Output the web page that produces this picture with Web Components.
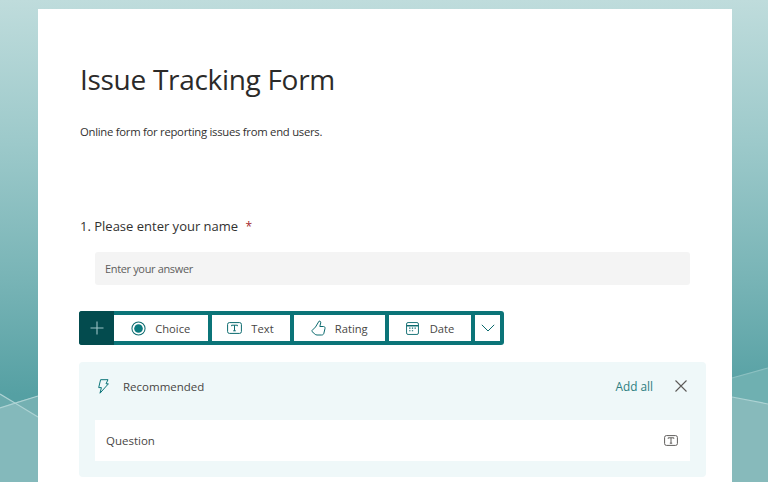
<!DOCTYPE html>
<html>
<head>
<meta charset="utf-8">
<title>Issue Tracking Form</title>
<style>
  html, body { margin: 0; height: 482px; overflow: hidden; }
  body { font-family: "Open Sans", "Noto Sans", "Liberation Sans", sans-serif; color: #323130; }
</style>
</head>
<body>
<form-page>
  <form-card>
    <form-header title-text="Issue Tracking Form" subtitle="Online form for reporting issues from end users."></form-header>
    <form-question label="1. Please enter your name" placeholder="Enter your answer"></form-question>
    <insert-toolbar>
      <tool-button icon="choice" width="93.5">Choice</tool-button>
      <tool-button icon="text" width="78">Text</tool-button>
      <tool-button icon="rating" width="91.5">Rating</tool-button>
      <tool-button icon="date" width="82" style="--gap: 11px">Date</tool-button>
    </insert-toolbar>
    <recommended-panel>
      <recommended-row>Question</recommended-row>
    </recommended-panel>
  </form-card>
</form-page>

<script>
const ICONS = {
  choice: `<svg width="15" height="15" viewBox="0 0 16 16"><circle cx="8" cy="8" r="7" fill="none" stroke="#0b6a6e" stroke-width="1.1"/><circle cx="8" cy="8" r="4.6" fill="#0b7a7e"/></svg>`,
  text: `<svg width="15" height="12" viewBox="0 0 15 12" fill="none" stroke="#0b6a6e" stroke-width="1"><rect x=".6" y=".6" width="13.8" height="10.8" rx="1.8"/><path d="M4.6 4.2V3.2h5.8v1M7.5 3.2v5.6M6.2 8.8h2.6"/></svg>`,
  rating: `<svg width="15" height="16" viewBox="0 0 15 16" fill="none" stroke="#0b6a6e" stroke-width="1" stroke-linejoin="round"><path d="M1 10.5 4.5 7 8 1.2C9.3.8 10 1.8 9.7 3L8.8 6.5h3.7c1.1 0 1.8.9 1.5 2l-1.2 5c-.3 1.1-1.2 1.5-2.2 1.5H6c-1 0-1.6-.4-2.2-1L1 11.5c-.4-.3-.3-.7 0-1Z"/></svg>`,
  date: `<svg width="13" height="13" viewBox="0 0 14 14" fill="none" stroke="#0b6a6e" stroke-width="1"><rect x=".6" y=".6" width="12.8" height="12.8" rx="1.6"/><path d="M.6 4h12.8" stroke-width="1.6"/><path d="M3.4 6.6h1.4M6.3 6.6h1.4M9.2 6.6h1.4M3.4 9.4h1.4M6.3 9.4h1.4" stroke-width="1.2"/></svg>`
};

class FormPage extends HTMLElement {
  constructor() {
    super();
    this.attachShadow({ mode: 'open' }).innerHTML = `
      <style>
        :host {
          display: block;
          position: relative;
          width: 768px;
          height: 482px;
          overflow: hidden;
          box-sizing: border-box;
          padding: 9px 36px 0 38px;
          background: linear-gradient(180deg, #bfdcdc 0%, #9cc9ca 30%, #78b4b6 58%, #55a0a3 82%);
        }
        svg { position: absolute; left: 0; top: 0; }
        .content { position: relative; height: 100%; }
      </style>
      <svg width="768" height="482" viewBox="0 0 768 482">
        <path d="M0 394 13 403 38 396V417L13 403 38 417V482H0Z" fill="#84b9bb"/>
        <path d="M13 403 38 396V417Z" fill="#74b0b2"/>
        <path d="M0 394 13 403 0 408Z" fill="#6aabad"/>
        <path d="M0 394 38 417M0 408 38 396" stroke="#aed3d4" stroke-width="1.2" fill="none"/>
        <path d="M732 378 768 368V404L732 397Z" fill="#6fb0b1"/>
        <path d="M732 397 768 404V482H732Z" fill="#87babb"/>
        <path d="M732 378 768 368" stroke="#8cc0c1" stroke-width="1.2" fill="none"/>
        <path d="M732 397 768 404" stroke="#aed3d4" stroke-width="1.2" fill="none"/>
      </svg>
      <div class="content"><slot></slot></div>`;
  }
}

class FormCard extends HTMLElement {
  constructor() {
    super();
    this.attachShadow({ mode: 'open' }).innerHTML = `
      <style>
        :host {
          display: block;
          height: 100%;
          background: #fff;
          box-sizing: border-box;
          padding: 49px 26px 0 41px;
        }
      </style>
      <slot></slot>`;
  }
}

class FormHeader extends HTMLElement {
  constructor() {
    super();
    this.attachShadow({ mode: 'open' }).innerHTML = `
      <style>
        :host { display: block; height: 158px; padding-left: 1px; }
        h1 { margin: 0; font: 400 28px/42px "Open Sans", sans-serif; color: #2b2a29; letter-spacing: -.3px; }
        p { margin: 23px 0 0; font: 400 11.3px/18px "Open Sans", sans-serif; color: #323130; letter-spacing: -.27px; }
      </style>
      <h1></h1><p></p>`;
    this.shadowRoot.querySelector('h1').textContent = this.getAttribute('title-text');
    this.shadowRoot.querySelector('p').textContent = this.getAttribute('subtitle');
  }
}

class FormQuestion extends HTMLElement {
  constructor() {
    super();
    this.attachShadow({ mode: 'open' }).innerHTML = `
      <style>
        :host { display: block; margin-right: 16px; }
        .label { font: 400 13px/20px "Open Sans", sans-serif; color: #323130; height: 20px; padding-left: 1px; }
        .req { color: #a4262c; margin-left: 4px; font-size: 12px; }
        .answer {
          margin: 16px 0 0 16px;
          height: 33px;
          box-sizing: border-box;
          padding: 0 0 1px 10px;
          background: #f4f4f4;
          border-radius: 3px;
          display: flex;
          align-items: center;
          font: 400 11px "Open Sans", sans-serif;
          letter-spacing: -.35px;
          color: #605e5c;
        }
      </style>
      <div class="label"><span class="q"></span> <span class="req">*</span></div>
      <div class="answer"></div>`;
    this.shadowRoot.querySelector('.q').textContent = this.getAttribute('label');
    this.shadowRoot.querySelector('.answer').textContent = this.getAttribute('placeholder');
  }
}

class InsertToolbar extends HTMLElement {
  constructor() {
    super();
    this.attachShadow({ mode: 'open' }).innerHTML = `
      <style>
        :host {
          display: inline-flex;
          margin-top: 26px;
          height: 34px;
          box-sizing: border-box;
          background: #0b7478;
          border-radius: 3px;
          padding: 4px 4px 4px 0;
          gap: 4px;
          vertical-align: top;
        }
        .add {
          width: 35px;
          margin: -4px -4px -4px 0;
          background: #034b4e;
          border-radius: 3px 0 0 3px;
          display: flex;
          align-items: center;
          justify-content: center;
        }
        .more {
          width: 25px;
          background: #fff;
          display: flex;
          align-items: center;
          justify-content: center;
        }
      </style>
      <div class="add"><svg width="14" height="14" viewBox="0 0 14 14"><path d="M7 .5v13M.5 7h13" stroke="#9cc4c5" stroke-width="1.1" fill="none"/></svg></div>
      <slot></slot>
      <div class="more"><svg width="14" height="8" viewBox="0 0 14 8"><path d="M.8.8 7 7 13.2.8" stroke="#0b6a6e" stroke-width="1" fill="none"/></svg></div>`;
  }
}

class ToolButton extends HTMLElement {
  constructor() {
    super();
    this.attachShadow({ mode: 'open' }).innerHTML = `
      <style>
        :host {
          display: flex;
          align-items: center;
          justify-content: center;
          gap: var(--gap, 9px);
          background: #fff;
          font: 400 11.2px "Open Sans", sans-serif;
          color: #484644;
        }
        .icon { display: flex; }
      </style>
      <span class="icon">${ICONS[this.getAttribute('icon')]}</span><slot></slot>`;
    this.style.width = this.getAttribute('width') + 'px';
  }
}

class RecommendedPanel extends HTMLElement {
  constructor() {
    super();
    this.attachShadow({ mode: 'open' }).innerHTML = `
      <style>
        :host {
          display: block;
          margin-top: 17px;
          height: 115px;
          box-sizing: border-box;
          background: #eff8f9;
          border-radius: 4px;
          padding: 0 16px;
        }
        .head {
          height: 58px;
          box-sizing: border-box;
          padding-bottom: 10px;
          display: flex;
          align-items: center;
          font: 400 11.5px "Open Sans", sans-serif;
          color: #484644;
        }
        .bolt { margin: 1px 14px 0 3px; display: flex; }
        .title { flex: 1; }
        .add { color: #2c7d80; margin-right: 22px; font-size: 11.8px; }
        .close { margin-right: 3px; display: flex; }
      </style>
      <div class="head">
        <span class="bolt"><svg width="11" height="15" viewBox="0 0 11 15" fill="none" stroke="#0b7478" stroke-width="1" stroke-linejoin="round"><path d="M2.6.7H10L8 4.8h2.4L2 14.2 3.4 8.6H.7Z"/></svg></span>
        <span class="title">Recommended</span>
        <span class="add">Add all</span>
        <span class="close"><svg width="12" height="12" viewBox="0 0 12 12"><path d="M.5.5l11 11M11.5.5.5 11.5" stroke="#5c5a58" stroke-width="1.1" fill="none"/></svg></span>
      </div>
      <slot></slot>`;
  }
}

class RecommendedRow extends HTMLElement {
  constructor() {
    super();
    this.attachShadow({ mode: 'open' }).innerHTML = `
      <style>
        :host {
          display: flex;
          align-items: center;
          justify-content: space-between;
          height: 41px;
          box-sizing: border-box;
          padding: 0 12px 0 11px;
          background: #fff;
          font: 400 11.5px "Open Sans", sans-serif;
          color: #484644;
        }
        svg { display: block; }
      </style>
      <slot></slot>
      <svg width="14" height="11" viewBox="0 0 14 11" fill="none" stroke="#605e5c" stroke-width="1"><rect x=".6" y=".6" width="12.8" height="9.8" rx="1.8"/><path d="M4.2 3.8V2.8h5.6v1M7 2.8v5.4M5.8 8.2h2.4"/></svg>`;
  }
}

customElements.define('form-page', FormPage);
customElements.define('form-card', FormCard);
customElements.define('form-header', FormHeader);
customElements.define('form-question', FormQuestion);
customElements.define('insert-toolbar', InsertToolbar);
customElements.define('tool-button', ToolButton);
customElements.define('recommended-panel', RecommendedPanel);
customElements.define('recommended-row', RecommendedRow);
</script>
</body>
</html>
